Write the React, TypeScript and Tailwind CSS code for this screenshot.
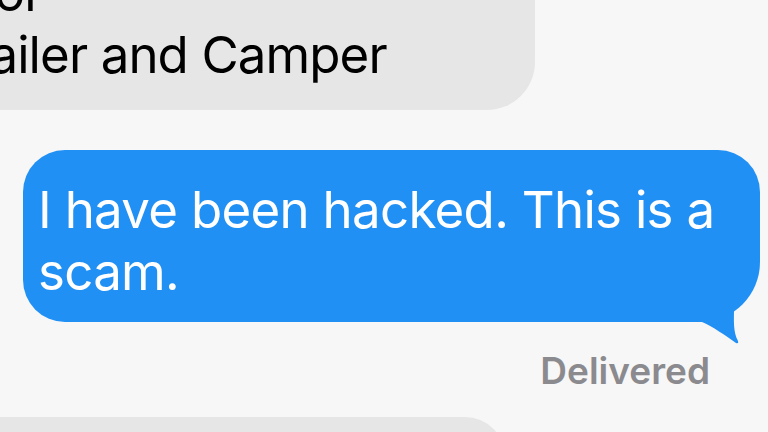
export default function App() {
  return (
    <div className="relative flex h-[432px] w-[768px] flex-col overflow-hidden bg-[#f7f7f7] font-['Inter','Liberation_Sans',sans-serif]">
      {/* incoming bubble, cropped at top and left */}
      <div className="-mt-[50px] -ml-[62px] w-[597px] rounded-[48px] bg-[#e6e6e6] pt-[12px] pb-[24px] pl-[18px] text-[51px] leading-[62px] tracking-[-0.9px] text-black">
        <div className="pl-[22px]">for</div>
        <div className="-ml-[14px]">Trailer and Camper</div>
      </div>

      {/* outgoing bubble */}
      <div className="relative mt-[40px] ml-[23px] w-[737px] rounded-[42px] rounded-br-[60px] bg-[#2190f5] pt-[29px] pb-[19px] pl-[15px] text-[51px] leading-[62px] tracking-[-0.7px] text-white">
        <div>I have been hacked. This is a</div>
        <div>scam.</div>
        <svg className="absolute left-[667px] top-[120px]" width="72" height="76" viewBox="0 0 72 76">
          <path d="M10 52 L10 40 L44 40 C44 50 43 62 48 71 Q49 74 46 73 C36 66 22 56 12 52 Z" fill="#2190f5" />
        </svg>
      </div>

      <div className="mt-[27px] pr-[58px] text-right text-[37px] leading-[44px] font-semibold text-[#8b8b8f]">Delivered</div>

      <div className="mt-[24px] -ml-[60px] h-[80px] w-[565px] shrink-0 rounded-[45px] bg-[#e6e6e6]" />
    </div>
  );
}
